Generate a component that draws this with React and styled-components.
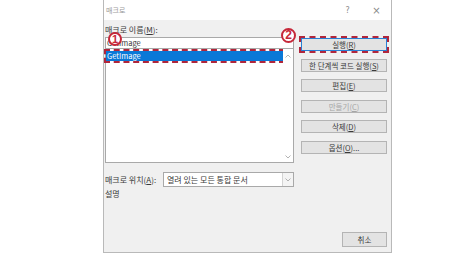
import React from 'react'
import styled, { createGlobalStyle } from 'styled-components'

const Global = createGlobalStyle`
  html, body { margin: 0; padding: 0; background: #ffffff; }
  body {
    font-family: "Noto Sans CJK KR", "Noto Sans", sans-serif;
    font-size: 8px;
    color: #3a3a3a;
  }
`

const Page = styled.div`
  width: 474px;
  height: 255px;
  overflow: hidden;
`

const Dialog = styled.div`
  position: relative;
  margin-left: 103px;
  width: 289px;
  height: 253px;
  box-sizing: border-box;
  border: 1px solid #b9b9b9;
  border-top: none;
  background: #f0f0f0;
  display: flex;
  flex-direction: column;
`

const TitleBar = styled.div`
  height: 20px;
  background: #ffffff;
  display: flex;
  align-items: center;
  padding: 0 0 0 2px;
  color: #9a9a9a;
  font-size: 7px;
`

const Title = styled.span`
  flex: 1;
`

const TitleButton = styled.span`
  width: 29px;
  text-align: center;
  color: #8a8a8a;
  font-family: "DejaVu Sans", sans-serif;
  font-size: ${p => p.$size || 8}px;
`

const Body = styled.div`
  flex: 1;
  display: flex;
  flex-direction: column;
  padding: 5px 4px 5px 1px;
`

const Main = styled.div`
  display: flex;
  gap: 7px;
`

const Left = styled.div`
  width: 189px;
  display: flex;
  flex-direction: column;
`

const Label = styled.div`
  height: 12px;
  line-height: 10px;
  white-space: nowrap;
`

const U = styled.span`
  text-decoration: underline;
`

const NameInput = styled.div`
  height: 12px;
  box-sizing: border-box;
  border: 1px solid #a9a9a9;
  background: #fff;
  padding-left: 1px;
  line-height: 10px;
  font-size: 7.5px;
`

const ListBox = styled.div`
  height: 114px;
  box-sizing: border-box;
  border: 1px solid #a9a9a9;
  border-top: none;
  background: #fff;
  display: flex;
  padding-top: 2px;
`

const Items = styled.div`
  flex: 1;
`

const Item = styled.div`
  height: 10px;
  line-height: 10px;
  font-size: 7.5px;
  padding-left: 1px;
  background: ${p => (p.$selected ? '#0a78d7' : 'transparent')};
  color: ${p => (p.$selected ? '#fff' : '#333')};
  outline: ${p => (p.$marked ? '2px dashed #b0263c' : 'none')};
`

const ScrollBar = styled.div`
  width: 10px;
  margin-top: -2px;
  display: flex;
  flex-direction: column;
  justify-content: space-between;
  align-items: center;
  padding: 5px 0 3px;
  background: #ffffff;
`

const Row = styled.div`
  display: flex;
  align-items: center;
  margin-top: 9px;
  height: 15px;
`

const RowLabel = styled.div`
  width: 58px;
  white-space: nowrap;
`

const Select = styled.div`
  flex: 1;
  height: 15px;
  box-sizing: border-box;
  border: 1px solid #a9a9a9;
  background: #fff;
  display: flex;
  align-items: center;
  padding-left: 3px;
`

const SelectText = styled.span`
  flex: 1;
`

const SelectArrow = styled.div`
  width: 10px;
  height: 13px;
  border-left: 1px solid #d4d4d4;
  background: #f4f4f4;
  display: flex;
  align-items: center;
  justify-content: center;
`

const Desc = styled.div`
  margin-top: 2px;
  line-height: 10px;
`

const Right = styled.div`
  width: 86px;
  display: flex;
  flex-direction: column;
  gap: 7.6px;
  padding-top: 13px;
`

const Button = styled.div`
  height: 13px;
  box-sizing: border-box;
  border: 1px solid ${p => (p.$primary ? '#2a7fd4' : '#b4b4b4')};
  background: #e3e3e3;
  color: ${p => (p.$disabled ? '#a6a6a6' : '#3a3a3a')};
  display: flex;
  align-items: center;
  justify-content: center;
  white-space: nowrap;
  font-size: 7.5px;
  outline: ${p => (p.$marked ? '2px dashed #b0263c' : 'none')};
  outline-offset: 0px;
`

const Spacer = styled.div`
  flex: 1;
`

const Footer = styled.div`
  display: flex;
  justify-content: flex-end;
`

const CancelButton = styled(Button)`
  width: 45px;
  height: 15px;
`

const Badge = styled.div`
  position: absolute;
  left: ${p => p.$x}px;
  top: ${p => p.$y}px;
  width: ${p => p.$d}px;
  height: ${p => p.$d}px;
  box-sizing: border-box;
  border-radius: 50%;
  border: 2px solid #c6283a;
  background: #ffffff;
  color: #c6283a;
  font-family: "Liberation Sans", Arial, sans-serif;
  font-weight: bold;
  font-size: ${p => p.$d - 3}px;
  line-height: ${p => p.$d - 4}px;
  text-align: center;
`

const Chevron = ({ up }) => (
  <svg width="6" height="4" viewBox="0 0 6 4">
    <path d={up ? 'M0.5 3.5 L3 1 L5.5 3.5' : 'M0.5 0.5 L3 3 L5.5 0.5'} fill="none" stroke="#a0a0a0" strokeWidth="0.8" />
  </svg>
)

const App = () => (
  <Page>
    <Global />
    <Dialog>
      <TitleBar>
        <Title>매크로</Title>
        <TitleButton>?</TitleButton>
        <TitleButton $size={10}>×</TitleButton>
      </TitleBar>
      <Body>
        <Main>
          <Left>
            <Label>매크로 이름(<U>M</U>):</Label>
            <NameInput>GetImage</NameInput>
            <ListBox>
              <Items>
                <Item $selected $marked>GetImage</Item>
              </Items>
              <ScrollBar>
                <Chevron up />
                <Chevron />
              </ScrollBar>
            </ListBox>
            <Row>
              <RowLabel>매크로 위치(<U>A</U>):</RowLabel>
              <Select>
                <SelectText>열려 있는 모든 통합 문서</SelectText>
                <SelectArrow><Chevron /></SelectArrow>
              </Select>
            </Row>
            <Desc>설명</Desc>
          </Left>
          <Right>
            <Button $primary $marked>실행(<U>R</U>)</Button>
            <Button>한 단계씩 코드 실행(<U>S</U>)</Button>
            <Button>편집(<U>E</U>)</Button>
            <Button $disabled>만들기(<U>C</U>)</Button>
            <Button>삭제(<U>D</U>)</Button>
            <Button>옵션(<U>O</U>)...</Button>
          </Right>
        </Main>
        <Spacer />
        <Footer>
          <CancelButton>취소</CancelButton>
        </Footer>
      </Body>
      <Badge $x={4} $y={32} $d={14}>1</Badge>
      <Badge $x={177} $y={28} $d={15}>2</Badge>
    </Dialog>
  </Page>
)

export default App
